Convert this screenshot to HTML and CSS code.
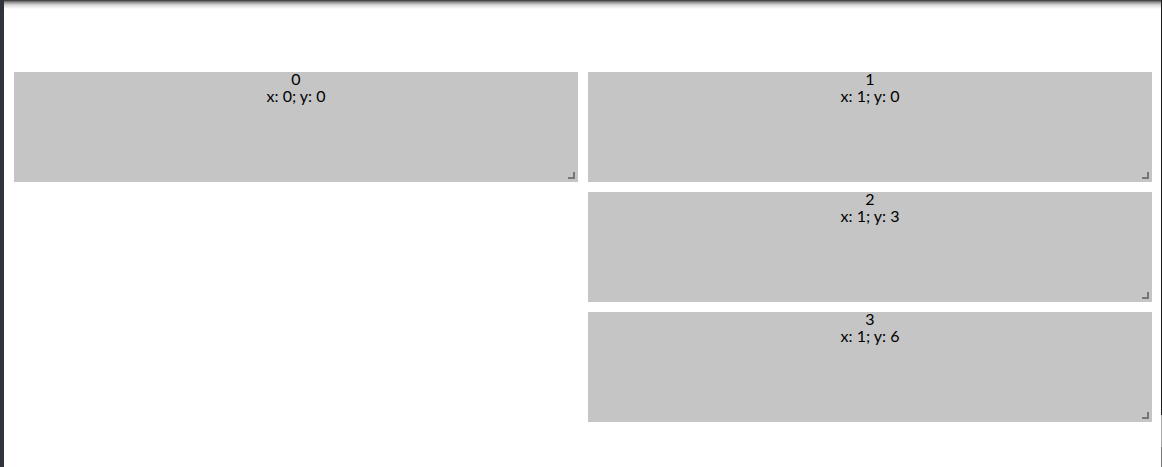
FILE: index.html
```html
<!DOCTYPE html>
<html>
<head>
<meta charset="utf-8">
<link rel="stylesheet" href="styles.css">
</head>
<body>
<div class="frame">
  <div class="side-bar"></div>
  <main class="main">
    <div class="grid">
      <div class="item col-0 row-0"><div class="text">0<br>x: 0; y: 0</div><span class="handle"></span></div>
      <div class="item col-1 row-0"><div class="text">1<br>x: 1; y: 0</div><span class="handle"></span></div>
      <div class="item col-1 row-3"><div class="text">2<br>x: 1; y: 3</div><span class="handle"></span></div>
      <div class="item col-1 row-6"><div class="text">3<br>x: 1; y: 6</div><span class="handle"></span></div>
    </div>
  </main>
  <div class="edge"></div>
</div>
</body>
</html>
```
FILE: styles.css
```css
html, body {
  margin: 0;
  padding: 0;
  height: 100%;
  background: #fff;
}
body {
  font-family: Lato, "Open Sans", sans-serif;
  font-size: 16px;
  color: #000;
  overflow: hidden;
}
.frame {
  display: flex;
  height: 467px;
  width: 1162px;
}
.side-bar {
  width: 4px;
  flex: none;
  background: #30333c;
}
.main {
  flex: 1;
  padding-top: 62px;
  background: linear-gradient(to bottom, #2e2e2e 0, #8a8a8a 2px, #d8d8d8 5px, #fff 9px) no-repeat;
  background-size: 100% 10px;
}
.edge {
  width: 1px;
  flex: none;
  background: linear-gradient(to bottom, #1c1c1c 0, #1c1c1c 415px, #aaa 415px, #aaa 447px, #777 447px);
}
.grid {
  display: grid;
  grid-template-columns: 1fr 1fr;
  grid-auto-rows: 30px;
  gap: 10px;
  padding: 10px 9px 10px 10px;
}
.item {
  position: relative;
  background: #c5c5c5;
  text-align: center;
  grid-row-end: span 3;
}
.col-0 { grid-column: 1; }
.col-1 { grid-column: 2; }
.row-0 { grid-row-start: 1; }
.row-3 { grid-row-start: 4; }
.row-6 { grid-row-start: 7; }
.text {
  line-height: 17px;
  margin-top: -2px;
}
.handle {
  position: absolute;
  right: 0;
  bottom: 0;
  width: 20px;
  height: 20px;
}
.handle::after {
  content: "";
  position: absolute;
  right: 3px;
  bottom: 3px;
  width: 5px;
  height: 5px;
  border-right: 2px solid rgba(0,0,0,0.4);
  border-bottom: 2px solid rgba(0,0,0,0.4);
}
```
